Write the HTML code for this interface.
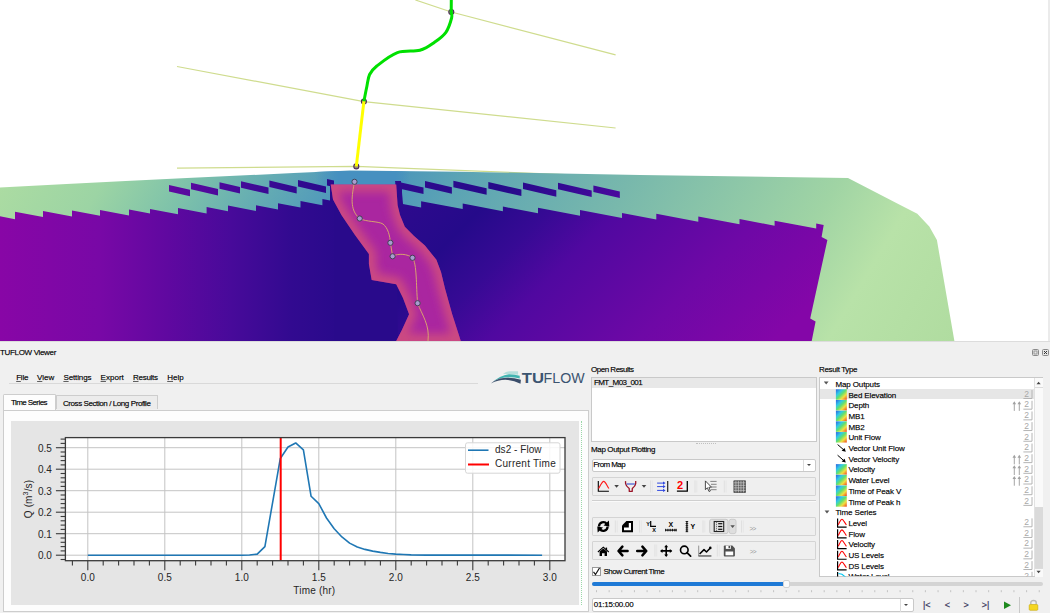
<!DOCTYPE html>
<html><head><meta charset="utf-8"><style>
html,body{margin:0;padding:0;}
body{width:1050px;height:613px;overflow:hidden;position:relative;background:#f0f0f0;font-family:"Liberation Sans",sans-serif;}
.t{position:absolute;font-size:8px;line-height:8px;white-space:nowrap;color:#000;letter-spacing:-0.45px;-webkit-text-stroke:0.25px rgba(0,0,0,0.6)}
.t u{text-decoration:underline;text-underline-offset:1px;text-decoration-thickness:0.7px}
.t2{position:absolute;font-size:9px;line-height:9px;white-space:nowrap;color:#3a3a60;-webkit-text-stroke:0.2px #3a3a60}
.box{position:absolute;background:#fff;border:1px solid #c9c9c9;box-sizing:border-box;}
.tb{position:absolute;background:#efefef;border:1px solid #d4d4d4;box-sizing:border-box;border-radius:1px}
.arr{position:absolute;width:0;height:0;border-left:2.4px solid transparent;border-right:2.4px solid transparent;border-top:2.8px solid #444;}
.dockbtn{position:absolute;width:7px;height:7px}
.grip{position:absolute;width:20px;height:1px;border-top:1px dotted #c0c0c0}
</style></head>
<body>
<div style="position:absolute;left:0;top:0;width:1050px;height:341px;overflow:hidden">
<svg width="1050" height="341" viewBox="0 0 1050 341" style="position:absolute;left:0;top:0">
<defs>
<linearGradient id="gterr" gradientUnits="userSpaceOnUse" x1="0" y1="180" x2="772" y2="643">
<stop offset="0" stop-color="#acdca2"/><stop offset="0.1" stop-color="#9cd4a4"/><stop offset="0.18" stop-color="#7ec2aa"/><stop offset="0.25" stop-color="#66aeb2"/><stop offset="0.3" stop-color="#58a0b8"/><stop offset="0.345" stop-color="#4a94bc"/><stop offset="0.38" stop-color="#4e98ba"/><stop offset="0.44" stop-color="#5ca4b4"/><stop offset="0.6" stop-color="#78b8ac"/><stop offset="0.8" stop-color="#a0d4a4"/><stop offset="0.88" stop-color="#b8e2a8"/><stop offset="1" stop-color="#b0dca0"/>
</linearGradient>
<linearGradient id="gstrip" x1="0" y1="0" x2="1" y2="0"><stop offset="0" stop-color="#4690c0" stop-opacity="0"/><stop offset="0.25" stop-color="#4690c0" stop-opacity="1"/><stop offset="0.85" stop-color="#4690c0" stop-opacity="1"/><stop offset="1" stop-color="#4690c0" stop-opacity="0"/></linearGradient>
<linearGradient id="gpur" gradientUnits="userSpaceOnUse" x1="0" y1="0" x2="575" y2="575">
<stop offset="0.19" stop-color="#8a08a8"/><stop offset="0.3" stop-color="#6c08a2"/><stop offset="0.4" stop-color="#4c0a9a"/><stop offset="0.5" stop-color="#300a8e"/><stop offset="0.6" stop-color="#250a8a"/><stop offset="0.66" stop-color="#360a94"/><stop offset="0.72" stop-color="#5008a0"/><stop offset="0.85" stop-color="#6e08a6"/><stop offset="0.97" stop-color="#8406a8"/>
</linearGradient>
<linearGradient id="gpurL" gradientUnits="userSpaceOnUse" x1="0" y1="0" x2="334" y2="0">
<stop offset="0" stop-color="#8806a6"/><stop offset="0.3" stop-color="#7808a6"/><stop offset="0.5" stop-color="#6008a0"/><stop offset="0.69" stop-color="#480a9a"/><stop offset="0.87" stop-color="#320a90"/><stop offset="1" stop-color="#2a0a8c"/>
</linearGradient>
<linearGradient id="gchan" gradientUnits="userSpaceOnUse" x1="335" y1="200" x2="465" y2="240">
<stop offset="0" stop-color="#e0606c"/><stop offset="0.22" stop-color="#c8428a"/><stop offset="0.5" stop-color="#a824a0"/><stop offset="0.78" stop-color="#b8348f"/><stop offset="1" stop-color="#cc4a84"/>
</linearGradient>
</defs>
<rect x="0" y="0" width="1050" height="341" fill="#ffffff"/>
<polyline points="415.4,0 451.3,12 615.6,54.9" fill="none" stroke="#cfdc8e" stroke-width="1.2"/>
<polyline points="177,66.5 363.9,101.6 615.6,128" fill="none" stroke="#cfdc8e" stroke-width="1.2"/>
<polyline points="177,168.1 356.3,166.4 615.6,176.5" fill="none" stroke="#cfdc8e" stroke-width="1.2"/>
<path d="M0,187.6 Q170,178.5 350,170.6 L460,171.7 L640,175.1 L848,178 L900.7,205.2 L917.3,213.7 L929.3,226.4 L936.9,240 L954.4,341 L0,341 Z" fill="url(#gterr)"/>
<polygon points="315,171 410,171.2 410,186 315,186" fill="url(#gstrip)"/>
<rect x="330" y="186" width="72" height="155" fill="#290a8b"/>
<polygon points="-20.0,212.5 15.0,219.2 15.0,211.8 43.0,217.1 43.0,211.0 72.0,216.5 72.0,210.5 100.0,215.8 100.0,210.0 129.0,215.5 129.0,209.5 150.0,213.5 150.0,209.0 178.0,214.3 178.0,208.0 206.6,213.4 206.6,207.1 228.0,211.2 228.0,205.6 256.0,210.9 256.0,205.2 278.0,209.4 278.0,203.3 300.5,207.6 300.5,201.0 322.4,205.2 322.4,199.1 334.0,201.3 334.0,181.0 334.0,341.0 -20.0,341.0" fill="url(#gpurL)" />
<polygon points="399.0,203.2 421.1,207.4 421.1,201.2 462.7,209.1 462.7,203.6 502.9,211.2 502.9,206.6 538.0,213.3 538.0,207.7 580.0,215.7 580.0,210.0 622.0,218.0 622.0,213.0 656.3,219.5 656.3,213.7 698.3,221.7 698.3,216.5 739.5,224.3 739.5,219.0 774.6,225.7 774.6,220.7 816.2,228.6 816.2,223.5 823.7,224.9 823.7,224.9 821.6,236.9 827.4,240.0 810.2,318.4 815.6,321.4 811.7,341.0 398.0,341.0 395.0,181.0" fill="url(#gpur)" />
<polygon points="395.0,181.0 401.0,181.0 403.0,204.0 399.0,204.0" fill="url(#gpur)" />
<polygon points="169.0,184.9 190.0,189.7 190.0,196.2 169.0,191.4" fill="url(#gpurL)" />
<polygon points="191.0,182.8 218.0,189.0 218.0,195.5 191.0,189.3" fill="url(#gpurL)" />
<polygon points="219.5,182.2 240.0,186.9 240.0,193.4 219.5,188.7" fill="url(#gpurL)" />
<polygon points="241.0,181.2 268.5,187.5 268.5,194.0 241.0,187.7" fill="url(#gpurL)" />
<polygon points="269.4,180.6 296.7,186.9 296.7,193.4 269.4,187.1" fill="url(#gpurL)" />
<polygon points="298.0,180.0 326.0,186.4 326.0,192.9 298.0,186.5" fill="url(#gpurL)" />
<polygon points="327.0,179.0 334.0,180.6 334.0,187.1 327.0,185.5" fill="url(#gpurL)" />
<polygon points="396.6,181.4 423.5,187.6 423.5,194.1 396.6,187.9" fill="url(#gpur)" />
<polygon points="425.0,181.1 451.9,187.3 451.9,193.8 425.0,187.6" fill="url(#gpur)" />
<polygon points="453.4,180.7 486.6,188.3 486.6,194.8 453.4,187.2" fill="url(#gpur)" />
<polygon points="488.3,182.0 521.4,189.6 521.4,196.1 488.3,188.5" fill="url(#gpur)" />
<polygon points="523.0,182.6 556.3,190.3 556.3,196.8 523.0,189.1" fill="url(#gpur)" />
<polygon points="558.0,182.7 591.7,190.5 591.7,197.0 558.0,189.2" fill="url(#gpur)" />
<polygon points="593.4,185.4 619.8,191.5 619.8,198.0 593.4,191.9" fill="url(#gpur)" />
<clipPath id="cch"><polygon points="330.7,184.5 396.2,184.5 397.6,205.2 400.0,215.0 404.8,226.7 414.0,236.0 424.9,245.4 436.4,259.8 441.0,272.0 445.0,288.5 452.2,314.3 460.8,341.0 396.2,341.0 401.9,330.1 409.1,314.3 403.0,298.0 396.2,284.2 371.7,279.9 368.9,264.0 368.9,254.0 355.0,235.0 341.6,215.3 333.0,199.5"/></clipPath>
<polygon points="330.7,184.5 396.2,184.5 397.6,205.2 400.0,215.0 404.8,226.7 414.0,236.0 424.9,245.4 436.4,259.8 441.0,272.0 445.0,288.5 452.2,314.3 460.8,341.0 396.2,341.0 401.9,330.1 409.1,314.3 403.0,298.0 396.2,284.2 371.7,279.9 368.9,264.0 368.9,254.0 355.0,235.0 341.6,215.3 333.0,199.5" fill="#aa26a0"/>
<filter id="fb" x="-20%" y="-20%" width="140%" height="140%"><feGaussianBlur stdDeviation="5"/></filter>
<g clip-path="url(#cch)"><g filter="url(#fb)"><polygon points="330.7,184.5 396.2,184.5 397.6,205.2 400.0,215.0 404.8,226.7 414.0,236.0 424.9,245.4 436.4,259.8 441.0,272.0 445.0,288.5 452.2,314.3 460.8,341.0 396.2,341.0 401.9,330.1 409.1,314.3 403.0,298.0 396.2,284.2 371.7,279.9 368.9,264.0 368.9,254.0 355.0,235.0 341.6,215.3 333.0,199.5" fill="none" stroke="#dc5a74" stroke-opacity="0.7" stroke-width="14" stroke-linejoin="round"/></g></g>
<circle cx="451.3" cy="12" r="2.5" fill="#9a8a70" stroke="#4a2a5a" stroke-width="1.1"/>
<circle cx="363.9" cy="101.6" r="2.5" fill="#9a8a70" stroke="#4a2a5a" stroke-width="1.1"/>
<circle cx="356.3" cy="166.4" r="2.5" fill="#9a8a70" stroke="#4a2a5a" stroke-width="1.1"/>
<path d="M451.3,0.0 C451.3,2.0 451.2,9.0 451.3,12.0 C451.4,15.0 452.5,14.6 451.6,18.0 C450.7,21.4 448.8,28.2 445.9,32.3 C443.0,36.4 438.5,39.5 434.2,42.5 C429.9,45.5 426.0,48.6 419.9,50.3 C413.8,52.0 404.6,50.0 397.4,52.6 C390.2,55.2 381.4,62.4 376.8,66.0 C372.2,69.7 371.2,71.1 369.6,74.5 C368.0,77.9 367.8,81.7 366.9,86.2 C365.9,90.7 364.4,98.9 363.9,101.4" fill="none" stroke="#00e000" stroke-width="3" stroke-linejoin="round"/>
<line x1="363.9" y1="101.4" x2="356.3" y2="166.4" stroke="#ffff00" stroke-width="3"/>
<path d="M354.5,181.8 C352,195 349,210 359.7,218.5 C366,222 378,221 383,224 C388,228 390,236 390.4,242.8 L392.6,256.3 C398,253 408,254 412.5,257.8 C417,264 416,285 417.6,303.2 C422,315 430,325 428,341" fill="none" stroke="#d8a070" stroke-width="1"/>
<circle cx="354.5" cy="181.8" r="2.6" fill="#a89cd0" stroke="#3c3c4c" stroke-width="0.9"/>
<circle cx="359.7" cy="218.5" r="2.6" fill="#a89cd0" stroke="#3c3c4c" stroke-width="0.9"/>
<circle cx="390.4" cy="242.8" r="2.6" fill="#a89cd0" stroke="#3c3c4c" stroke-width="0.9"/>
<circle cx="392.6" cy="256.3" r="2.6" fill="#a89cd0" stroke="#3c3c4c" stroke-width="0.9"/>
<circle cx="412.5" cy="257.8" r="2.6" fill="#a89cd0" stroke="#3c3c4c" stroke-width="0.9"/>
<circle cx="417.6" cy="303.2" r="2.6" fill="#a89cd0" stroke="#3c3c4c" stroke-width="0.9"/>
<rect x="1048.5" y="0" width="1" height="341" fill="#d8d8d8"/>
</svg>
</div>
<div style="position:absolute;left:0;top:341px;width:1050px;height:1px;background:#dcdcdc"></div>
<div class="t" style="left:0px;top:349.1px;letter-spacing:-0.331px">TUFLOW Viewer</div>
<div class="dockbtn" style="left:1031.5px;top:349px"><svg width="7" height="7" style="display:block"><rect x="0.5" y="0.5" width="6" height="6" rx="1" fill="#e6e6e6" stroke="#8a8a8a"/><rect x="2" y="2" width="3" height="3" fill="none" stroke="#8a8a8a" stroke-width="0.8"/></svg></div>
<div class="dockbtn" style="left:1041.5px;top:349px"><svg width="7" height="7" style="display:block"><rect x="0.5" y="0.5" width="6" height="6" rx="1" fill="#e6e6e6" stroke="#8a8a8a"/><path d="M2,2 L5,5 M5,2 L2,5" stroke="#333" stroke-width="1"/></svg></div>

<!-- menu -->
<div class="t" style="left:16.2px;top:373.8px;letter-spacing:-0.223px"><u>F</u>ile</div>
<div class="t" style="left:37.1px;top:373.8px;letter-spacing:0.001px"><u>V</u>iew</div>
<div class="t" style="left:63.4px;top:373.8px;letter-spacing:-0.113px"><u>S</u>ettings</div>
<div class="t" style="left:100.6px;top:373.8px;letter-spacing:0.013px"><u>E</u>xport</div>
<div class="t" style="left:133px;top:373.8px;letter-spacing:-0.282px"><u>R</u>esults</div>
<div class="t" style="left:167.2px;top:373.8px;letter-spacing:0.037px"><u>H</u>elp</div>
<div style="position:absolute;left:9px;top:383px;width:469px;height:1px;background:#d9d9d9"></div>

<!-- logo -->
<svg style="position:absolute;left:488px;top:366px" width="100" height="22" viewBox="0 0 100 22">
<path d="M15,7.8 Q18,5.5 21.1,5.3 L30.1,5.3 L30.1,8.8 Q26,8 21,8.2 Q18,8.3 15,7.8 Z" fill="#b6dedb"/>
<path d="M2.9,17.6 Q12,9 21,8.2 Q27,8.2 31.7,9.8 L31.7,12.5 Q22,10 11.7,12.5 Q6,14.5 2.9,17.6 Z" fill="#40b4b1"/>
<path d="M2.9,17.6 Q17.5,10 32.5,17.8 L32.9,13.7 Q22,10.3 11.7,12.5 Q6,14.5 2.9,17.6 Z" fill="#3a4d6a"/>
<text x="33.8" y="16.8" font-family="Liberation Sans, sans-serif" font-size="15" font-weight="bold" fill="#3b5470" textLength="22.2" lengthAdjust="spacingAndGlyphs">TU</text>
<text x="55.6" y="16.8" font-family="Liberation Sans, sans-serif" font-size="15" fill="#3b5470" textLength="41" lengthAdjust="spacingAndGlyphs">FLOW</text>
</svg>

<!-- tabs -->
<div style="position:absolute;left:3.2px;top:409.5px;width:585.7px;height:202.3px;background:#fdfdfd;border:1px solid #cdcdcd;box-sizing:border-box"></div>
<div style="position:absolute;left:55.6px;top:395.3px;width:102.4px;height:14.2px;background:#ececec;border:1px solid #cdcdcd;border-bottom:none;box-sizing:border-box;border-radius:1px 1px 0 0"></div>
<div style="position:absolute;left:3.2px;top:394.3px;width:52.4px;height:16.2px;background:#fdfdfd;border:1px solid #cdcdcd;border-bottom:none;box-sizing:border-box;border-radius:1.5px 1.5px 0 0"></div>
<div class="t" style="left:11px;top:398.9px;letter-spacing:-0.589px">Time Series</div>
<div class="t" style="left:62.9px;top:399.5px;letter-spacing:-0.413px">Cross Section / Long Profile</div>
<div style="position:absolute;left:11.2px;top:421.2px;width:568px;height:184px;background:#e5e5e5"></div>
<div style="position:absolute;left:580.5px;top:421px;width:0;height:184px;border-left:1px dotted #9ad8a8"></div>
<svg width="1050" height="613" style="position:absolute;left:0;top:0" font-family="Liberation Sans, sans-serif">
<rect x="65.4" y="437.6" width="499.6" height="123.10000000000002" fill="#ffffff"/>
<line x1="65.4" y1="555.20" x2="565.0" y2="555.20" stroke="#c4c4c4" stroke-width="1"/>
<line x1="65.4" y1="533.70" x2="565.0" y2="533.70" stroke="#c4c4c4" stroke-width="1"/>
<line x1="65.4" y1="512.20" x2="565.0" y2="512.20" stroke="#c4c4c4" stroke-width="1"/>
<line x1="65.4" y1="490.70" x2="565.0" y2="490.70" stroke="#c4c4c4" stroke-width="1"/>
<line x1="65.4" y1="469.20" x2="565.0" y2="469.20" stroke="#c4c4c4" stroke-width="1"/>
<line x1="65.4" y1="447.70" x2="565.0" y2="447.70" stroke="#c4c4c4" stroke-width="1"/>
<line x1="87.80" y1="437.6" x2="87.80" y2="560.7" stroke="#c4c4c4" stroke-width="1"/>
<line x1="164.80" y1="437.6" x2="164.80" y2="560.7" stroke="#c4c4c4" stroke-width="1"/>
<line x1="241.80" y1="437.6" x2="241.80" y2="560.7" stroke="#c4c4c4" stroke-width="1"/>
<line x1="318.80" y1="437.6" x2="318.80" y2="560.7" stroke="#c4c4c4" stroke-width="1"/>
<line x1="395.80" y1="437.6" x2="395.80" y2="560.7" stroke="#c4c4c4" stroke-width="1"/>
<line x1="472.80" y1="437.6" x2="472.80" y2="560.7" stroke="#c4c4c4" stroke-width="1"/>
<line x1="549.80" y1="437.6" x2="549.80" y2="560.7" stroke="#c4c4c4" stroke-width="1"/>
<polyline points="87.80,555.20 241.80,555.20 249.50,554.99 257.20,554.12 264.90,546.60 272.60,502.53 280.30,458.45 288.00,447.06 295.70,442.97 303.40,449.85 311.10,496.29 318.80,503.60 326.50,518.00 334.20,528.75 341.90,536.93 349.60,543.16 357.30,547.03 365.00,549.40 372.70,551.12 380.40,552.41 388.10,553.48 395.80,554.12 403.50,554.56 411.20,554.88 426.60,555.09 542.10,555.20" fill="none" stroke="#1f77b4" stroke-width="1.6" stroke-linejoin="round"/>
<line x1="280.7" y1="437.6" x2="280.7" y2="560.7" stroke="#ff0000" stroke-width="2"/>
<rect x="65.4" y="437.6" width="499.6" height="123.10000000000002" fill="none" stroke="#3a3a3a" stroke-width="1.3"/>
<line x1="55.90" y1="555.20" x2="65.4" y2="555.20" stroke="#3a3a3a" stroke-width="1.1"/>
<line x1="60.60" y1="550.90" x2="65.4" y2="550.90" stroke="#3a3a3a" stroke-width="1.1"/>
<line x1="60.60" y1="546.60" x2="65.4" y2="546.60" stroke="#3a3a3a" stroke-width="1.1"/>
<line x1="60.60" y1="542.30" x2="65.4" y2="542.30" stroke="#3a3a3a" stroke-width="1.1"/>
<line x1="60.60" y1="538.00" x2="65.4" y2="538.00" stroke="#3a3a3a" stroke-width="1.1"/>
<line x1="55.90" y1="533.70" x2="65.4" y2="533.70" stroke="#3a3a3a" stroke-width="1.1"/>
<line x1="60.60" y1="529.40" x2="65.4" y2="529.40" stroke="#3a3a3a" stroke-width="1.1"/>
<line x1="60.60" y1="525.10" x2="65.4" y2="525.10" stroke="#3a3a3a" stroke-width="1.1"/>
<line x1="60.60" y1="520.80" x2="65.4" y2="520.80" stroke="#3a3a3a" stroke-width="1.1"/>
<line x1="60.60" y1="516.50" x2="65.4" y2="516.50" stroke="#3a3a3a" stroke-width="1.1"/>
<line x1="55.90" y1="512.20" x2="65.4" y2="512.20" stroke="#3a3a3a" stroke-width="1.1"/>
<line x1="60.60" y1="507.90" x2="65.4" y2="507.90" stroke="#3a3a3a" stroke-width="1.1"/>
<line x1="60.60" y1="503.60" x2="65.4" y2="503.60" stroke="#3a3a3a" stroke-width="1.1"/>
<line x1="60.60" y1="499.30" x2="65.4" y2="499.30" stroke="#3a3a3a" stroke-width="1.1"/>
<line x1="60.60" y1="495.00" x2="65.4" y2="495.00" stroke="#3a3a3a" stroke-width="1.1"/>
<line x1="55.90" y1="490.70" x2="65.4" y2="490.70" stroke="#3a3a3a" stroke-width="1.1"/>
<line x1="60.60" y1="486.40" x2="65.4" y2="486.40" stroke="#3a3a3a" stroke-width="1.1"/>
<line x1="60.60" y1="482.10" x2="65.4" y2="482.10" stroke="#3a3a3a" stroke-width="1.1"/>
<line x1="60.60" y1="477.80" x2="65.4" y2="477.80" stroke="#3a3a3a" stroke-width="1.1"/>
<line x1="60.60" y1="473.50" x2="65.4" y2="473.50" stroke="#3a3a3a" stroke-width="1.1"/>
<line x1="55.90" y1="469.20" x2="65.4" y2="469.20" stroke="#3a3a3a" stroke-width="1.1"/>
<line x1="60.60" y1="464.90" x2="65.4" y2="464.90" stroke="#3a3a3a" stroke-width="1.1"/>
<line x1="60.60" y1="460.60" x2="65.4" y2="460.60" stroke="#3a3a3a" stroke-width="1.1"/>
<line x1="60.60" y1="456.30" x2="65.4" y2="456.30" stroke="#3a3a3a" stroke-width="1.1"/>
<line x1="60.60" y1="452.00" x2="65.4" y2="452.00" stroke="#3a3a3a" stroke-width="1.1"/>
<line x1="55.90" y1="447.70" x2="65.4" y2="447.70" stroke="#3a3a3a" stroke-width="1.1"/>
<line x1="60.60" y1="443.40" x2="65.4" y2="443.40" stroke="#3a3a3a" stroke-width="1.1"/>
<line x1="60.60" y1="439.10" x2="65.4" y2="439.10" stroke="#3a3a3a" stroke-width="1.1"/>
<line x1="60.60" y1="559.50" x2="65.4" y2="559.50" stroke="#3a3a3a" stroke-width="1.1"/>
<line x1="72.40" y1="560.7" x2="72.40" y2="565.50" stroke="#3a3a3a" stroke-width="1.1"/>
<line x1="87.80" y1="560.7" x2="87.80" y2="570.20" stroke="#3a3a3a" stroke-width="1.1"/>
<line x1="103.20" y1="560.7" x2="103.20" y2="565.50" stroke="#3a3a3a" stroke-width="1.1"/>
<line x1="118.60" y1="560.7" x2="118.60" y2="565.50" stroke="#3a3a3a" stroke-width="1.1"/>
<line x1="134.00" y1="560.7" x2="134.00" y2="565.50" stroke="#3a3a3a" stroke-width="1.1"/>
<line x1="149.40" y1="560.7" x2="149.40" y2="565.50" stroke="#3a3a3a" stroke-width="1.1"/>
<line x1="164.80" y1="560.7" x2="164.80" y2="570.20" stroke="#3a3a3a" stroke-width="1.1"/>
<line x1="180.20" y1="560.7" x2="180.20" y2="565.50" stroke="#3a3a3a" stroke-width="1.1"/>
<line x1="195.60" y1="560.7" x2="195.60" y2="565.50" stroke="#3a3a3a" stroke-width="1.1"/>
<line x1="211.00" y1="560.7" x2="211.00" y2="565.50" stroke="#3a3a3a" stroke-width="1.1"/>
<line x1="226.40" y1="560.7" x2="226.40" y2="565.50" stroke="#3a3a3a" stroke-width="1.1"/>
<line x1="241.80" y1="560.7" x2="241.80" y2="570.20" stroke="#3a3a3a" stroke-width="1.1"/>
<line x1="257.20" y1="560.7" x2="257.20" y2="565.50" stroke="#3a3a3a" stroke-width="1.1"/>
<line x1="272.60" y1="560.7" x2="272.60" y2="565.50" stroke="#3a3a3a" stroke-width="1.1"/>
<line x1="288.00" y1="560.7" x2="288.00" y2="565.50" stroke="#3a3a3a" stroke-width="1.1"/>
<line x1="303.40" y1="560.7" x2="303.40" y2="565.50" stroke="#3a3a3a" stroke-width="1.1"/>
<line x1="318.80" y1="560.7" x2="318.80" y2="570.20" stroke="#3a3a3a" stroke-width="1.1"/>
<line x1="334.20" y1="560.7" x2="334.20" y2="565.50" stroke="#3a3a3a" stroke-width="1.1"/>
<line x1="349.60" y1="560.7" x2="349.60" y2="565.50" stroke="#3a3a3a" stroke-width="1.1"/>
<line x1="365.00" y1="560.7" x2="365.00" y2="565.50" stroke="#3a3a3a" stroke-width="1.1"/>
<line x1="380.40" y1="560.7" x2="380.40" y2="565.50" stroke="#3a3a3a" stroke-width="1.1"/>
<line x1="395.80" y1="560.7" x2="395.80" y2="570.20" stroke="#3a3a3a" stroke-width="1.1"/>
<line x1="411.20" y1="560.7" x2="411.20" y2="565.50" stroke="#3a3a3a" stroke-width="1.1"/>
<line x1="426.60" y1="560.7" x2="426.60" y2="565.50" stroke="#3a3a3a" stroke-width="1.1"/>
<line x1="442.00" y1="560.7" x2="442.00" y2="565.50" stroke="#3a3a3a" stroke-width="1.1"/>
<line x1="457.40" y1="560.7" x2="457.40" y2="565.50" stroke="#3a3a3a" stroke-width="1.1"/>
<line x1="472.80" y1="560.7" x2="472.80" y2="570.20" stroke="#3a3a3a" stroke-width="1.1"/>
<line x1="488.20" y1="560.7" x2="488.20" y2="565.50" stroke="#3a3a3a" stroke-width="1.1"/>
<line x1="503.60" y1="560.7" x2="503.60" y2="565.50" stroke="#3a3a3a" stroke-width="1.1"/>
<line x1="519.00" y1="560.7" x2="519.00" y2="565.50" stroke="#3a3a3a" stroke-width="1.1"/>
<line x1="534.40" y1="560.7" x2="534.40" y2="565.50" stroke="#3a3a3a" stroke-width="1.1"/>
<line x1="549.80" y1="560.7" x2="549.80" y2="570.20" stroke="#3a3a3a" stroke-width="1.1"/>
<text x="51.9" y="559.20" font-size="10" text-anchor="end" fill="#262626">0.0</text>
<text x="51.9" y="537.70" font-size="10" text-anchor="end" fill="#262626">0.1</text>
<text x="51.9" y="516.20" font-size="10" text-anchor="end" fill="#262626">0.2</text>
<text x="51.9" y="494.70" font-size="10" text-anchor="end" fill="#262626">0.3</text>
<text x="51.9" y="473.20" font-size="10" text-anchor="end" fill="#262626">0.4</text>
<text x="51.9" y="451.70" font-size="10" text-anchor="end" fill="#262626">0.5</text>
<text x="87.80" y="580.6" font-size="10" text-anchor="middle" fill="#262626">0.0</text>
<text x="164.80" y="580.6" font-size="10" text-anchor="middle" fill="#262626">0.5</text>
<text x="241.80" y="580.6" font-size="10" text-anchor="middle" fill="#262626">1.0</text>
<text x="318.80" y="580.6" font-size="10" text-anchor="middle" fill="#262626">1.5</text>
<text x="395.80" y="580.6" font-size="10" text-anchor="middle" fill="#262626">2.0</text>
<text x="472.80" y="580.6" font-size="10" text-anchor="middle" fill="#262626">2.5</text>
<text x="549.80" y="580.6" font-size="10" text-anchor="middle" fill="#262626">3.0</text>
<text x="314.3" y="594.2" font-size="10" letter-spacing="0.2" text-anchor="middle" fill="#262626">Time (hr)</text>
<text transform="translate(31.6,499) rotate(-90)" font-size="10" letter-spacing="0.15" text-anchor="middle" fill="#262626">Q (m<tspan font-size="7" dy="-3.8">3</tspan><tspan dy="3.8">/s)</tspan></text>
<rect x="465.5" y="442.8" width="94.5" height="30.4" rx="2" fill="#ffffff" fill-opacity="0.85" stroke="#d6d6d6" stroke-width="1"/>
<line x1="468" y1="450.2" x2="488.5" y2="450.2" stroke="#1f77b4" stroke-width="1.6"/>
<line x1="468" y1="464.5" x2="489" y2="464.5" stroke="#ff0000" stroke-width="2"/>
<text x="495" y="453.2" font-size="10" letter-spacing="0.04" fill="#262626">ds2 - Flow</text>
<text x="495" y="467.2" font-size="10" letter-spacing="0.27" fill="#262626">Current Time</text>
</svg>

<!-- open results -->
<div class="t" style="left:591px;top:366px;letter-spacing:-0.489px">Open Results</div>
<div class="box" style="left:591.4px;top:377.2px;width:225.4px;height:64.5px"></div>
<div style="position:absolute;left:592.4px;top:378.2px;width:223.4px;height:10px;background:#e8e8e8"></div>
<div class="t" style="left:593.9px;top:379.2px;letter-spacing:-0.550px">FMT_M03_001</div>
<div class="grip" style="left:696px;top:443px"></div>

<div class="t" style="left:591px;top:445.8px;letter-spacing:-0.353px">Map Output Plotting</div>
<div class="box" style="left:591.6px;top:458.6px;width:224.8px;height:13.8px;border-radius:2px"></div>
<div style="position:absolute;left:803px;top:459.6px;width:1px;height:11.8px;background:#dcdcdc"></div>
<div class="arr" style="left:806.9px;top:463.6px"></div>
<div class="t" style="left:593.3px;top:461.2px;letter-spacing:-0.594px">From Map</div>

<!-- toolbar 1 -->
<div class="tb" style="left:591.6px;top:476.5px;width:224.8px;height:19.8px"></div>

<div style="position:absolute;left:591.6px;top:500px;width:224.8px;height:1px;background:#cfcfcf"></div>
<div style="position:absolute;left:591.6px;top:501px;width:224.8px;height:1px;background:#fafafa"></div>

<!-- toolbar 2 -->
<div class="tb" style="left:591.6px;top:516.7px;width:224.8px;height:19.8px"></div>

<!-- toolbar 3 -->
<div class="tb" style="left:591.6px;top:540.9px;width:224.8px;height:19.6px"></div>
<svg style="position:absolute;left:0;top:0" width="1050" height="613">
<path d="M598.3,481 L598.3,491.3 L608.9,491.3" fill="none" stroke="#000" stroke-width="1.1"/>
<path d="M598.6,488.5 C600.6,485.5 602,481.3 603.7,481.3 C605.4,481.3 606.8,485.5 608.9,488.5" fill="none" stroke="#ff1a1a" stroke-width="1.15"/>
<path d="M614.3,485.1 L618.9,485.1 L616.5999999999999,487.70000000000005 Z" fill="#444"/>
<path d="M625.5,481.1 L625.6,483.6 Q626,486 629.2,488.6 L629.3,491.4 L632.2,491.4 L632.3,488.6 Q635.4,486 635.7,483.6 L635.7,481.1" fill="none" stroke="#9a1428" stroke-width="1.3" stroke-linejoin="round"/>
<line x1="626.6" y1="484" x2="634.8" y2="484" stroke="#5a6fd8" stroke-width="1.4"/>
<path d="M641.7,485.1 L646.3000000000001,485.1 L644.0,487.70000000000005 Z" fill="#444"/>
<line x1="650.5" y1="480.5" x2="650.5" y2="492.5" stroke="#dedede" stroke-width="0.9"/><line x1="652.3" y1="480.5" x2="652.3" y2="492.5" stroke="#e4e4e4" stroke-width="0.9"/>
<line x1="657.1" y1="483.1" x2="664" y2="483.1" stroke="#3048e0" stroke-width="1"/><path d="M663,481.5 L665.6,483.1 L663,484.70000000000005 Z" fill="#3048e0"/>
<line x1="657.1" y1="486.6" x2="664" y2="486.6" stroke="#3048e0" stroke-width="1"/><path d="M663,485.0 L665.6,486.6 L663,488.20000000000005 Z" fill="#3048e0"/>
<line x1="657.1" y1="490.4" x2="664" y2="490.4" stroke="#3048e0" stroke-width="1"/><path d="M663,488.79999999999995 L665.6,490.4 L663,492.0 Z" fill="#3048e0"/>
<line x1="667.7" y1="481" x2="667.7" y2="492" stroke="#222" stroke-width="1.2"/>
<text x="677" y="489.3" font-family="Liberation Sans, sans-serif" font-weight="bold" font-size="11" fill="#ff0000">2</text>
<path d="M676.9,491.2 L687.3,491.2 L687.3,481" fill="none" stroke="#000" stroke-width="1.3"/>
<line x1="695" y1="480.5" x2="695" y2="492.5" stroke="#dedede" stroke-width="0.9"/><line x1="696.8" y1="480.5" x2="696.8" y2="492.5" stroke="#e4e4e4" stroke-width="0.9"/>
<path d="M705.4,480.9 L705.4,489.6 L707.4,487.8 L709,491.5 L710.4,490.9 L708.9,487.3 L711.5,487.2 Z" fill="#fff" stroke="#222" stroke-width="0.8" stroke-linejoin="round"/>
<line x1="710.3" y1="481.4" x2="716.6" y2="481.4" stroke="#777" stroke-width="0.9"/>
<line x1="711" y1="484.3" x2="716.6" y2="484.3" stroke="#777" stroke-width="0.9"/>
<line x1="711" y1="487" x2="716.6" y2="487" stroke="#777" stroke-width="0.9"/>
<line x1="711" y1="489.7" x2="716.6" y2="489.7" stroke="#777" stroke-width="0.9"/>
<line x1="724.3" y1="480.5" x2="724.3" y2="492.5" stroke="#dedede" stroke-width="0.9"/><line x1="726.0999999999999" y1="480.5" x2="726.0999999999999" y2="492.5" stroke="#e4e4e4" stroke-width="0.9"/>
<rect x="733.4" y="480.3" width="12.6" height="12.6" rx="1" fill="#5e5e5e"/>
<line x1="735.92" y1="480.8" x2="735.92" y2="492.4" stroke="#d8d8d8" stroke-width="0.6"/>
<line x1="733.9" y1="482.82" x2="745.5" y2="482.82" stroke="#d8d8d8" stroke-width="0.6"/>
<line x1="738.44" y1="480.8" x2="738.44" y2="492.4" stroke="#d8d8d8" stroke-width="0.6"/>
<line x1="733.9" y1="485.34" x2="745.5" y2="485.34" stroke="#d8d8d8" stroke-width="0.6"/>
<line x1="740.96" y1="480.8" x2="740.96" y2="492.4" stroke="#d8d8d8" stroke-width="0.6"/>
<line x1="733.9" y1="487.86" x2="745.5" y2="487.86" stroke="#d8d8d8" stroke-width="0.6"/>
<line x1="743.48" y1="480.8" x2="743.48" y2="492.4" stroke="#d8d8d8" stroke-width="0.6"/>
<line x1="733.9" y1="490.38" x2="745.5" y2="490.38" stroke="#d8d8d8" stroke-width="0.6"/>
<path d="M599,526.5 A4.3,4.3 0 0 1 606.8,524" fill="none" stroke="#000" stroke-width="2.3"/><path d="M608.9,520.6 L609.3,526.4 L603.6,525.6 Z" fill="#000"/>
<path d="M607.6,526.5 A4.3,4.3 0 0 1 599.8,529" fill="none" stroke="#000" stroke-width="2.3"/><path d="M597.7,532.4 L597.3,526.6 L603,527.4 Z" fill="#000"/>
<line x1="615.4" y1="520.5" x2="615.4" y2="532.5" stroke="#dedede" stroke-width="0.9"/><line x1="617.1999999999999" y1="520.5" x2="617.1999999999999" y2="532.5" stroke="#e4e4e4" stroke-width="0.9"/>
<path d="M622,525.4 L626.4,521 L633,521 L633,532.2 L622,532.2 Z" fill="#000"/>
<path d="M628.8,523.1 L631,523.1 L631,530.2 L624,530.2 L624,527.4 L628.8,527.4 Z" fill="#fff"/>
<line x1="639.5" y1="520.5" x2="639.5" y2="532.5" stroke="#dedede" stroke-width="0.9"/><line x1="641.3" y1="520.5" x2="641.3" y2="532.5" stroke="#e4e4e4" stroke-width="0.9"/>
<text x="646.2" y="526" font-size="5.5" font-family="Liberation Sans, sans-serif" font-weight="bold" fill="#000">Y</text>
<path d="M650.7,521 L650.7,526.4 L656,526.4" fill="none" stroke="#000" stroke-width="1.2"/>
<text x="652.2" y="532" font-size="5.5" font-family="Liberation Sans, sans-serif" font-weight="bold" fill="#000">X</text>
<text x="668.4" y="526.6" font-size="7" font-family="Liberation Sans, sans-serif" font-weight="bold" fill="#000">X</text>
<line x1="665.1" y1="530.1" x2="676.6" y2="530.1" stroke="#000" stroke-width="1.1"/>
<line x1="665.6" y1="528.8" x2="665.6" y2="531.4" stroke="#000" stroke-width="0.8"/>
<line x1="667.9" y1="528.8" x2="667.9" y2="531.4" stroke="#000" stroke-width="0.8"/>
<line x1="670.2" y1="528.8" x2="670.2" y2="531.4" stroke="#000" stroke-width="0.8"/>
<line x1="672.5" y1="528.8" x2="672.5" y2="531.4" stroke="#000" stroke-width="0.8"/>
<line x1="674.8" y1="528.8" x2="674.8" y2="531.4" stroke="#000" stroke-width="0.8"/>
<line x1="676.2" y1="528.8" x2="676.2" y2="531.4" stroke="#000" stroke-width="0.8"/>
<line x1="686.9" y1="521.3" x2="686.9" y2="531.9" stroke="#000" stroke-width="1.1"/>
<line x1="685.6" y1="521.5" x2="688.2" y2="521.5" stroke="#000" stroke-width="0.8"/>
<line x1="685.6" y1="523.6" x2="688.2" y2="523.6" stroke="#000" stroke-width="0.8"/>
<line x1="685.6" y1="525.7" x2="688.2" y2="525.7" stroke="#000" stroke-width="0.8"/>
<line x1="685.6" y1="527.8" x2="688.2" y2="527.8" stroke="#000" stroke-width="0.8"/>
<line x1="685.6" y1="529.9" x2="688.2" y2="529.9" stroke="#000" stroke-width="0.8"/>
<line x1="685.6" y1="531.7" x2="688.2" y2="531.7" stroke="#000" stroke-width="0.8"/>
<text x="690.6" y="528.8" font-size="7" font-family="Liberation Sans, sans-serif" font-weight="bold" fill="#000">Y</text>
<line x1="703" y1="520.5" x2="703" y2="532.5" stroke="#dedede" stroke-width="0.9"/><line x1="704.8" y1="520.5" x2="704.8" y2="532.5" stroke="#e4e4e4" stroke-width="0.9"/>
<rect x="709.7" y="519.3" width="18.3" height="14.3" rx="2" fill="#e2e2e2" stroke="#c4c4c4" stroke-width="0.9"/>
<rect x="729.1" y="519.3" width="6.9" height="14.3" rx="2" fill="#dedede" stroke="#c8c8c8" stroke-width="0.9"/>
<path d="M730.3,525.3 L734.9,525.3 L732.5999999999999,527.9 Z" fill="#555"/>
<rect x="714.2" y="521.5" width="9.5" height="10" fill="none" stroke="#222" stroke-width="1.1"/>
<line x1="716.5" y1="521.8" x2="716.5" y2="531.3" stroke="#555" stroke-width="0.9" stroke-dasharray="1,1"/>
<line x1="718.2" y1="523.7" x2="722.3" y2="523.7" stroke="#111" stroke-width="1.2"/>
<line x1="718.2" y1="526.5" x2="722.3" y2="526.5" stroke="#111" stroke-width="1.2"/>
<line x1="718.2" y1="529.3" x2="722.3" y2="529.3" stroke="#111" stroke-width="1.2"/>
<line x1="741.5" y1="520.5" x2="741.5" y2="532.5" stroke="#dedede" stroke-width="0.9"/><line x1="743.3" y1="520.5" x2="743.3" y2="532.5" stroke="#e4e4e4" stroke-width="0.9"/>
<text x="749.6" y="530.6" font-family="Liberation Sans, sans-serif" font-size="6.5" fill="#9a9a9a" letter-spacing="-0.8">&gt;&gt;</text>
<path d="M597.9,552 L603.3,547.2 L608.8,552" fill="none" stroke="#000" stroke-width="1.1"/>
<path d="M599.6,551.6 L603.3,548.5 L607,551.6 L607,556.1 L604.6,556.1 L604.6,553.3 L602,553.3 L602,556.1 L599.6,556.1 Z" fill="#000"/>
<rect x="605.7" y="547.6" width="1.4" height="2.6" fill="#000"/>
<path d="M622.4,546.6 L618.5,551 L622.4,555.4 M618.8,551 L627.6,551" fill="none" stroke="#000" stroke-width="2.5" stroke-linecap="round" stroke-linejoin="round"/>
<path d="M642.4,546.6 L646.3,551 L642.4,555.4 M646,551 L637.2,551" fill="none" stroke="#000" stroke-width="2.5" stroke-linecap="round" stroke-linejoin="round"/>
<line x1="654.9" y1="544.5" x2="654.9" y2="556.5" stroke="#dedede" stroke-width="0.9"/><line x1="656.6999999999999" y1="544.5" x2="656.6999999999999" y2="556.5" stroke="#e4e4e4" stroke-width="0.9"/>
<path d="M666.2,546 L666.2,556 M661,550.9 L671.4,550.9" stroke="#000" stroke-width="1.6"/>
<path d="M666.2,544.7 L668.2,547.2 L664.2,547.2 Z M666.2,557 L668.2,554.5 L664.2,554.5 Z M660,550.9 L662.5,548.9 L662.5,552.9 Z M672.3,550.9 L669.8,548.9 L669.8,552.9 Z" fill="#000"/>
<circle cx="684.3" cy="549.9" r="3.8" fill="none" stroke="#000" stroke-width="1.6"/><line x1="687" y1="552.7" x2="690.6" y2="556.1" stroke="#000" stroke-width="1.8" stroke-linecap="round"/>
<path d="M698.7,545.6 L698.7,556" stroke="#888" stroke-width="0.9"/><rect x="698.4" y="555.2" width="13" height="1.5" fill="#666"/>
<path d="M699.6,554 L704,549.6 L706.5,552 L710.3,548" fill="none" stroke="#000" stroke-width="1.5" stroke-linejoin="round"/><circle cx="710.3" cy="547.9" r="1.3" fill="#000"/>
<line x1="717.4" y1="544.5" x2="717.4" y2="556.5" stroke="#dedede" stroke-width="0.9"/><line x1="719.1999999999999" y1="544.5" x2="719.1999999999999" y2="556.5" stroke="#e4e4e4" stroke-width="0.9"/>
<path d="M723.8,546.6 Q723.8,545.6 724.8,545.6 L732.3,545.6 L734.9,548.3 L734.9,555.4 Q734.9,556.4 733.9,556.4 L724.8,556.4 Q723.8,556.4 723.8,555.4 Z" fill="#505050"/>
<rect x="725.8" y="545.6" width="5" height="3.3" fill="#fff"/><rect x="728.6" y="546" width="1.2" height="2.2" fill="#222"/><rect x="725.5" y="551.5" width="7.7" height="3.8" fill="#fff"/>
<text x="749.8" y="554.4" font-family="Liberation Sans, sans-serif" font-size="6.5" fill="#9a9a9a" letter-spacing="-0.8">&gt;&gt;</text>
<line x1="596.50" y1="590.2" x2="596.50" y2="592.2" stroke="#bdbdbd" stroke-width="0.9"/>
<line x1="609.15" y1="590.2" x2="609.15" y2="592.2" stroke="#bdbdbd" stroke-width="0.9"/>
<line x1="621.80" y1="590.2" x2="621.80" y2="592.2" stroke="#bdbdbd" stroke-width="0.9"/>
<line x1="634.45" y1="590.2" x2="634.45" y2="592.2" stroke="#bdbdbd" stroke-width="0.9"/>
<line x1="647.10" y1="590.2" x2="647.10" y2="592.2" stroke="#bdbdbd" stroke-width="0.9"/>
<line x1="659.75" y1="590.2" x2="659.75" y2="592.2" stroke="#bdbdbd" stroke-width="0.9"/>
<line x1="672.40" y1="590.2" x2="672.40" y2="592.2" stroke="#bdbdbd" stroke-width="0.9"/>
<line x1="685.05" y1="590.2" x2="685.05" y2="592.2" stroke="#bdbdbd" stroke-width="0.9"/>
<line x1="697.70" y1="590.2" x2="697.70" y2="592.2" stroke="#bdbdbd" stroke-width="0.9"/>
<line x1="710.35" y1="590.2" x2="710.35" y2="592.2" stroke="#bdbdbd" stroke-width="0.9"/>
<line x1="723.00" y1="590.2" x2="723.00" y2="592.2" stroke="#bdbdbd" stroke-width="0.9"/>
<line x1="735.65" y1="590.2" x2="735.65" y2="592.2" stroke="#bdbdbd" stroke-width="0.9"/>
<line x1="748.30" y1="590.2" x2="748.30" y2="592.2" stroke="#bdbdbd" stroke-width="0.9"/>
<line x1="760.95" y1="590.2" x2="760.95" y2="592.2" stroke="#bdbdbd" stroke-width="0.9"/>
<line x1="773.60" y1="590.2" x2="773.60" y2="592.2" stroke="#bdbdbd" stroke-width="0.9"/>
<line x1="786.25" y1="590.2" x2="786.25" y2="592.2" stroke="#bdbdbd" stroke-width="0.9"/>
<line x1="798.90" y1="590.2" x2="798.90" y2="592.2" stroke="#bdbdbd" stroke-width="0.9"/>
<line x1="811.55" y1="590.2" x2="811.55" y2="592.2" stroke="#bdbdbd" stroke-width="0.9"/>
<line x1="824.20" y1="590.2" x2="824.20" y2="592.2" stroke="#bdbdbd" stroke-width="0.9"/>
<line x1="836.85" y1="590.2" x2="836.85" y2="592.2" stroke="#bdbdbd" stroke-width="0.9"/>
<line x1="849.50" y1="590.2" x2="849.50" y2="592.2" stroke="#bdbdbd" stroke-width="0.9"/>
<line x1="862.15" y1="590.2" x2="862.15" y2="592.2" stroke="#bdbdbd" stroke-width="0.9"/>
<line x1="874.80" y1="590.2" x2="874.80" y2="592.2" stroke="#bdbdbd" stroke-width="0.9"/>
<line x1="887.45" y1="590.2" x2="887.45" y2="592.2" stroke="#bdbdbd" stroke-width="0.9"/>
<line x1="900.10" y1="590.2" x2="900.10" y2="592.2" stroke="#bdbdbd" stroke-width="0.9"/>
<line x1="912.75" y1="590.2" x2="912.75" y2="592.2" stroke="#bdbdbd" stroke-width="0.9"/>
<line x1="925.40" y1="590.2" x2="925.40" y2="592.2" stroke="#bdbdbd" stroke-width="0.9"/>
<line x1="938.05" y1="590.2" x2="938.05" y2="592.2" stroke="#bdbdbd" stroke-width="0.9"/>
<line x1="950.70" y1="590.2" x2="950.70" y2="592.2" stroke="#bdbdbd" stroke-width="0.9"/>
<line x1="963.35" y1="590.2" x2="963.35" y2="592.2" stroke="#bdbdbd" stroke-width="0.9"/>
<line x1="976.00" y1="590.2" x2="976.00" y2="592.2" stroke="#bdbdbd" stroke-width="0.9"/>
<line x1="988.65" y1="590.2" x2="988.65" y2="592.2" stroke="#bdbdbd" stroke-width="0.9"/>
<line x1="1001.30" y1="590.2" x2="1001.30" y2="592.2" stroke="#bdbdbd" stroke-width="0.9"/>
<line x1="1013.95" y1="590.2" x2="1013.95" y2="592.2" stroke="#bdbdbd" stroke-width="0.9"/>
<line x1="1026.60" y1="590.2" x2="1026.60" y2="592.2" stroke="#bdbdbd" stroke-width="0.9"/>
<line x1="1039.25" y1="590.2" x2="1039.25" y2="592.2" stroke="#bdbdbd" stroke-width="0.9"/>
</svg>

<!-- checkbox -->
<div style="position:absolute;left:591.6px;top:567px;width:9px;height:9px;background:#fff;border:1px solid #9a9a9a;box-sizing:border-box"></div>
<svg style="position:absolute;left:592px;top:567px" width="9" height="9"><path d="M1.5,4.8 L3.5,7.5 L7.5,1" fill="none" stroke="#111" stroke-width="1.2"/></svg>
<div class="t" style="left:603.4px;top:567.8px;letter-spacing:-0.445px">Show Current Time</div>

<!-- slider -->
<div style="position:absolute;left:591.6px;top:582px;width:451px;height:3.6px;background:#d4d4d4;border-radius:2px"></div>
<div style="position:absolute;left:591.6px;top:582px;width:194px;height:3.6px;background:#1f7ad6;border-radius:2px"></div>
<div style="position:absolute;left:782.7px;top:580.3px;width:7.6px;height:7.4px;background:#fbfbfb;border:1px solid #d2d2d2;box-sizing:border-box;border-radius:2px"></div>


<!-- time box -->
<div class="box" style="left:591.9px;top:597.6px;width:321.8px;height:14.8px;border-radius:2px"></div>
<div style="position:absolute;left:900.2px;top:598.6px;width:1px;height:13px;background:#dcdcdc"></div>
<div class="arr" style="left:904.1px;top:603.5px"></div>
<div class="t" style="left:593.7px;top:601.3px;letter-spacing:-0.215px">01:15:00.00</div>

<div class="t2" style="left:922.9px;top:600.5px">|&lt;</div>
<div class="t2" style="left:944.8px;top:600.5px">&lt;</div>
<div class="t2" style="left:963.4px;top:600.5px">&gt;</div>
<div class="t2" style="left:981.7px;top:600.5px">&gt;|</div>
<svg style="position:absolute;left:1003px;top:601px" width="9" height="9"><path d="M1,0.5 L8,4.2 L1,8 Z" fill="#1e8a1e"/></svg>
<div style="position:absolute;left:1018.5px;top:597px;width:1px;height:16px;background:#c8c8c8"></div>
<svg style="position:absolute;left:1027.5px;top:598.5px" width="11" height="12"><path d="M2.8,5.5 L2.8,3.6 C2.8,0.8 8.2,0.8 8.2,3.6 L8.2,5.5" fill="none" stroke="#b8b8b8" stroke-width="1.4"/><rect x="1.2" y="5.5" width="8.6" height="5.8" rx="1" fill="#f5d622" stroke="#c8a800" stroke-width="0.6"/></svg>

<!-- result type -->
<div class="t" style="left:819.1px;top:366px;letter-spacing:-0.373px">Result Type</div>
<div class="box" style="left:819.4px;top:377.3px;width:224.1px;height:200px"></div>
<div style="position:absolute;left:820.4px;top:389.3px;width:213.9px;height:9.3px;background:#e6e6e6"></div>
<div style="position:absolute;left:1034.4px;top:378.3px;width:9.1px;height:198px;background:#fafafa;border-left:1px solid #e2e2e2;box-sizing:border-box"></div>
<div style="position:absolute;left:1034.9px;top:378.3px;width:8px;height:9.5px;border-bottom:1px solid #dcdcdc;box-sizing:border-box"></div>
<div style="position:absolute;left:1035px;top:506.7px;width:7.9px;height:60.9px;background:#dadada"></div>
<div style="position:absolute;left:1034.9px;top:567.6px;width:8px;height:9.4px;border-top:1px solid #dcdcdc;box-sizing:border-box;background:#fafafa"></div>
<svg style="position:absolute;left:0;top:0" width="1050" height="613">
<defs><linearGradient id="gic" x1="0" y1="0" x2="1" y2="1"><stop offset="0" stop-color="#3060e0"/><stop offset="0.3" stop-color="#30c8e8"/><stop offset="0.5" stop-color="#60e070"/><stop offset="0.72" stop-color="#f0e040"/><stop offset="1" stop-color="#f04020"/></linearGradient><clipPath id="clt"><rect x="819" y="378" width="215" height="198.5"/></clipPath></defs>
<g clip-path="url(#clt)">
<path d="M823.8,381.6 L828.6,381.6 L826.2,384.4 Z" fill="#555"/>
<path d="M824.6,510.6 L829.4,510.6 L827,513.4 Z" fill="#555"/>
<rect x="835.9" y="389.29" width="10.9" height="10.5" fill="url(#gic)"/>
<text x="1024.2" y="396.79" font-family="Liberation Sans, sans-serif" font-size="8.5" fill="#a8a8a8">2</text>
<path d="M1023.4,398.49 L1032,398.49 L1032,390.09" fill="none" stroke="#b4b4b4" stroke-width="1"/>
<rect x="835.9" y="399.98" width="10.9" height="10.5" fill="url(#gic)"/>
<text x="1024.2" y="407.48" font-family="Liberation Sans, sans-serif" font-size="8.5" fill="#a8a8a8">2</text>
<path d="M1023.4,409.18 L1032,409.18 L1032,400.78" fill="none" stroke="#b4b4b4" stroke-width="1"/>
<line x1="1014.3" y1="402.38" x2="1014.3" y2="410.88" stroke="#a0a0a0" stroke-width="0.95"/><path d="M1012.5,404.18 L1014.3,401.18 L1016.0999999999999,404.18 Z" fill="#a0a0a0"/>
<line x1="1019.3" y1="402.38" x2="1019.3" y2="410.88" stroke="#a0a0a0" stroke-width="0.95"/><path d="M1017.5,404.18 L1019.3,401.18 L1021.0999999999999,404.18 Z" fill="#a0a0a0"/>
<rect x="835.9" y="410.67" width="10.9" height="10.5" fill="url(#gic)"/>
<text x="1024.2" y="418.17" font-family="Liberation Sans, sans-serif" font-size="8.5" fill="#a8a8a8">2</text>
<path d="M1023.4,419.87 L1032,419.87 L1032,411.47" fill="none" stroke="#b4b4b4" stroke-width="1"/>
<rect x="835.9" y="421.36" width="10.9" height="10.5" fill="url(#gic)"/>
<text x="1024.2" y="428.86" font-family="Liberation Sans, sans-serif" font-size="8.5" fill="#a8a8a8">2</text>
<path d="M1023.4,430.56 L1032,430.56 L1032,422.16" fill="none" stroke="#b4b4b4" stroke-width="1"/>
<rect x="835.9" y="432.05" width="10.9" height="10.5" fill="url(#gic)"/>
<text x="1024.2" y="439.55" font-family="Liberation Sans, sans-serif" font-size="8.5" fill="#a8a8a8">2</text>
<path d="M1023.4,441.25 L1032,441.25 L1032,432.85" fill="none" stroke="#b4b4b4" stroke-width="1"/>
<path d="M837.6,444.54 L844.3,450.34" stroke="#000" stroke-width="1"/><path d="M845.8,451.74 L841.6,450.74 L844.6,447.94 Z" fill="#000"/>
<text x="1024.2" y="450.24" font-family="Liberation Sans, sans-serif" font-size="8.5" fill="#a8a8a8">2</text>
<path d="M1023.4,451.94 L1032,451.94 L1032,443.54" fill="none" stroke="#b4b4b4" stroke-width="1"/>
<path d="M837.6,455.23 L844.3,461.03" stroke="#000" stroke-width="1"/><path d="M845.8,462.43 L841.6,461.43 L844.6,458.63 Z" fill="#000"/>
<text x="1024.2" y="460.93" font-family="Liberation Sans, sans-serif" font-size="8.5" fill="#a8a8a8">2</text>
<path d="M1023.4,462.63 L1032,462.63 L1032,454.23" fill="none" stroke="#b4b4b4" stroke-width="1"/>
<line x1="1014.3" y1="455.83" x2="1014.3" y2="464.33" stroke="#a0a0a0" stroke-width="0.95"/><path d="M1012.5,457.63 L1014.3,454.63 L1016.0999999999999,457.63 Z" fill="#a0a0a0"/>
<line x1="1019.3" y1="455.83" x2="1019.3" y2="464.33" stroke="#a0a0a0" stroke-width="0.95"/><path d="M1017.5,457.63 L1019.3,454.63 L1021.0999999999999,457.63 Z" fill="#a0a0a0"/>
<rect x="835.9" y="464.12" width="10.9" height="10.5" fill="url(#gic)"/>
<text x="1024.2" y="471.62" font-family="Liberation Sans, sans-serif" font-size="8.5" fill="#a8a8a8">2</text>
<path d="M1023.4,473.32 L1032,473.32 L1032,464.92" fill="none" stroke="#b4b4b4" stroke-width="1"/>
<line x1="1014.3" y1="466.52" x2="1014.3" y2="475.02" stroke="#a0a0a0" stroke-width="0.95"/><path d="M1012.5,468.32 L1014.3,465.32 L1016.0999999999999,468.32 Z" fill="#a0a0a0"/>
<line x1="1019.3" y1="466.52" x2="1019.3" y2="475.02" stroke="#a0a0a0" stroke-width="0.95"/><path d="M1017.5,468.32 L1019.3,465.32 L1021.0999999999999,468.32 Z" fill="#a0a0a0"/>
<rect x="835.9" y="474.81" width="10.9" height="10.5" fill="url(#gic)"/>
<text x="1024.2" y="482.31" font-family="Liberation Sans, sans-serif" font-size="8.5" fill="#a8a8a8">2</text>
<path d="M1023.4,484.01 L1032,484.01 L1032,475.61" fill="none" stroke="#b4b4b4" stroke-width="1"/>
<line x1="1014.3" y1="477.21" x2="1014.3" y2="485.71" stroke="#a0a0a0" stroke-width="0.95"/><path d="M1012.5,479.01 L1014.3,476.01 L1016.0999999999999,479.01 Z" fill="#a0a0a0"/>
<line x1="1019.3" y1="477.21" x2="1019.3" y2="485.71" stroke="#a0a0a0" stroke-width="0.95"/><path d="M1017.5,479.01 L1019.3,476.01 L1021.0999999999999,479.01 Z" fill="#a0a0a0"/>
<rect x="835.9" y="485.50" width="10.9" height="10.5" fill="url(#gic)"/>
<text x="1024.2" y="493.00" font-family="Liberation Sans, sans-serif" font-size="8.5" fill="#a8a8a8">2</text>
<path d="M1023.4,494.70 L1032,494.70 L1032,486.30" fill="none" stroke="#b4b4b4" stroke-width="1"/>
<rect x="835.9" y="496.19" width="10.9" height="10.5" fill="url(#gic)"/>
<text x="1024.2" y="503.69" font-family="Liberation Sans, sans-serif" font-size="8.5" fill="#a8a8a8">2</text>
<path d="M1023.4,505.39 L1032,505.39 L1032,496.99" fill="none" stroke="#b4b4b4" stroke-width="1"/>
<path d="M837.6,518.57 L837.6,527.17 L846.6,527.17" fill="none" stroke="#000" stroke-width="1.2"/>
<path d="M838.2,524.77 C839.6,522.57 840.6,519.17 841.9,519.17 C843.2,519.17 844.6,522.57 846.4,524.97" fill="none" stroke="#ff0000" stroke-width="1.05"/>
<text x="1024.2" y="525.07" font-family="Liberation Sans, sans-serif" font-size="8.5" fill="#a8a8a8">2</text>
<path d="M1023.4,526.77 L1032,526.77 L1032,518.37" fill="none" stroke="#b4b4b4" stroke-width="1"/>
<path d="M837.6,529.26 L837.6,537.86 L846.6,537.86" fill="none" stroke="#000" stroke-width="1.2"/>
<path d="M838.2,535.46 C839.6,533.26 840.6,529.86 841.9,529.86 C843.2,529.86 844.6,533.26 846.4,535.66" fill="none" stroke="#ff0000" stroke-width="1.05"/>
<text x="1024.2" y="535.76" font-family="Liberation Sans, sans-serif" font-size="8.5" fill="#a8a8a8">2</text>
<path d="M1023.4,537.46 L1032,537.46 L1032,529.06" fill="none" stroke="#b4b4b4" stroke-width="1"/>
<path d="M837.6,539.95 L837.6,548.55 L846.6,548.55" fill="none" stroke="#000" stroke-width="1.2"/>
<path d="M838.2,546.15 C839.6,543.95 840.6,540.55 841.9,540.55 C843.2,540.55 844.6,543.95 846.4,546.35" fill="none" stroke="#ff0000" stroke-width="1.05"/>
<text x="1024.2" y="546.45" font-family="Liberation Sans, sans-serif" font-size="8.5" fill="#a8a8a8">2</text>
<path d="M1023.4,548.15 L1032,548.15 L1032,539.75" fill="none" stroke="#b4b4b4" stroke-width="1"/>
<path d="M837.6,550.64 L837.6,559.24 L846.6,559.24" fill="none" stroke="#000" stroke-width="1.2"/>
<path d="M838.2,556.84 C839.6,554.64 840.6,551.24 841.9,551.24 C843.2,551.24 844.6,554.64 846.4,557.04" fill="none" stroke="#ff0000" stroke-width="1.05"/>
<text x="1024.2" y="557.14" font-family="Liberation Sans, sans-serif" font-size="8.5" fill="#a8a8a8">2</text>
<path d="M1023.4,558.84 L1032,558.84 L1032,550.44" fill="none" stroke="#b4b4b4" stroke-width="1"/>
<path d="M837.6,561.33 L837.6,569.93 L846.6,569.93" fill="none" stroke="#000" stroke-width="1.2"/>
<path d="M838.2,567.53 C839.6,565.33 840.6,561.93 841.9,561.93 C843.2,561.93 844.6,565.33 846.4,567.73" fill="none" stroke="#ff0000" stroke-width="1.05"/>
<text x="1024.2" y="567.83" font-family="Liberation Sans, sans-serif" font-size="8.5" fill="#a8a8a8">2</text>
<path d="M1023.4,569.53 L1032,569.53 L1032,561.13" fill="none" stroke="#b4b4b4" stroke-width="1"/>
<path d="M837.6,572.02 L837.6,580.62 L846.6,580.62" fill="none" stroke="#000" stroke-width="1.2"/>
<path d="M838.4,573.52 L842,574.32 L846,577.52" fill="none" stroke="#00c8f0" stroke-width="1.1"/>
<text x="1024.2" y="578.52" font-family="Liberation Sans, sans-serif" font-size="8.5" fill="#a8a8a8">2</text>
<path d="M1023.4,580.22 L1032,580.22 L1032,571.82" fill="none" stroke="#b4b4b4" stroke-width="1"/>
</g>
<path d="M1036.5,384.2 L1040.7,384.2 L1038.6,381.8 Z" fill="#444"/>
<path d="M1036.5,570.8 L1040.7,570.8 L1038.6,573.2 Z" fill="#444"/>
</svg>
<div style="position:absolute;left:819.4px;top:378.3px;width:214.5px;height:198px;overflow:hidden">
<div class="t" style="left:16.00px;top:2.63px;letter-spacing:-0.12px">Map Outputs</div>
<div class="t" style="left:29.00px;top:13.32px;letter-spacing:-0.12px">Bed Elevation</div>
<div class="t" style="left:29.00px;top:24.01px;letter-spacing:-0.12px">Depth</div>
<div class="t" style="left:29.00px;top:34.70px;letter-spacing:-0.12px">MB1</div>
<div class="t" style="left:29.00px;top:45.39px;letter-spacing:-0.12px">MB2</div>
<div class="t" style="left:29.00px;top:56.08px;letter-spacing:-0.12px">Unit Flow</div>
<div class="t" style="left:29.00px;top:66.77px;letter-spacing:-0.12px">Vector Unit Flow</div>
<div class="t" style="left:29.00px;top:77.46px;letter-spacing:-0.12px">Vector Velocity</div>
<div class="t" style="left:29.00px;top:88.15px;letter-spacing:-0.12px">Velocity</div>
<div class="t" style="left:29.00px;top:98.84px;letter-spacing:-0.12px">Water Level</div>
<div class="t" style="left:29.00px;top:109.53px;letter-spacing:-0.12px">Time of Peak V</div>
<div class="t" style="left:29.00px;top:120.22px;letter-spacing:-0.12px">Time of Peak h</div>
<div class="t" style="left:16.00px;top:130.91px;letter-spacing:-0.12px">Time Series</div>
<div class="t" style="left:29.00px;top:141.60px;letter-spacing:-0.12px">Level</div>
<div class="t" style="left:29.00px;top:152.29px;letter-spacing:-0.12px">Flow</div>
<div class="t" style="left:29.00px;top:162.98px;letter-spacing:-0.12px">Velocity</div>
<div class="t" style="left:29.00px;top:173.67px;letter-spacing:-0.12px">US Levels</div>
<div class="t" style="left:29.00px;top:184.36px;letter-spacing:-0.12px">DS Levels</div>
<div class="t" style="left:29.00px;top:195.05px;letter-spacing:-0.12px">Water Level</div>
</div>

</body></html>
